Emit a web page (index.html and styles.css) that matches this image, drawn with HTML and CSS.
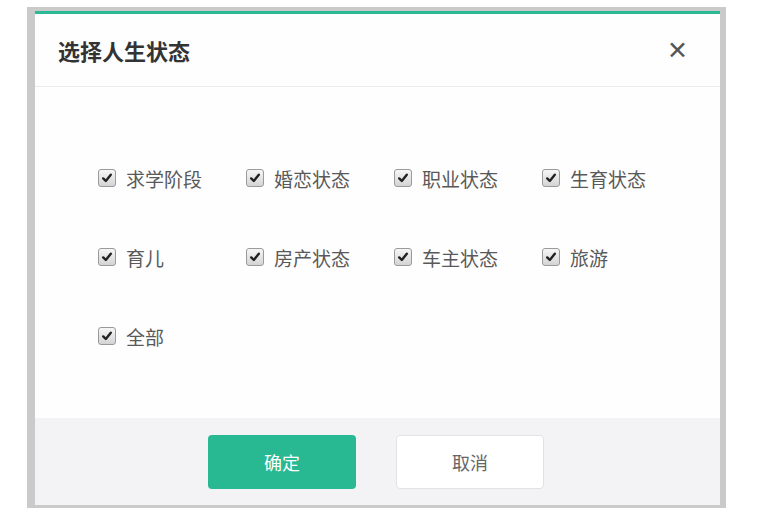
FILE: index.html
```html
<!DOCTYPE html>
<html>
<head>
  <title>选择人生状态</title>
  <link rel="stylesheet" href="styles.css">
</head>
<body>
  <div class="frame">
    <div class="dialog">
      <div class="dialog-header">
        <h2 class="dialog-title">选择人生状态</h2>
        <span class="close">&#x2715;</span>
      </div>
      <div class="dialog-body">
        <label class="option"><span class="box"><svg viewBox="0 0 12 12"><path d="M2.2 6.4 L4.8 9 L9.8 2.8" /></svg></span>求学阶段</label>
        <label class="option"><span class="box"><svg viewBox="0 0 12 12"><path d="M2.2 6.4 L4.8 9 L9.8 2.8" /></svg></span>婚恋状态</label>
        <label class="option"><span class="box"><svg viewBox="0 0 12 12"><path d="M2.2 6.4 L4.8 9 L9.8 2.8" /></svg></span>职业状态</label>
        <label class="option"><span class="box"><svg viewBox="0 0 12 12"><path d="M2.2 6.4 L4.8 9 L9.8 2.8" /></svg></span>生育状态</label>
        <label class="option"><span class="box"><svg viewBox="0 0 12 12"><path d="M2.2 6.4 L4.8 9 L9.8 2.8" /></svg></span>育儿</label>
        <label class="option"><span class="box"><svg viewBox="0 0 12 12"><path d="M2.2 6.4 L4.8 9 L9.8 2.8" /></svg></span>房产状态</label>
        <label class="option"><span class="box"><svg viewBox="0 0 12 12"><path d="M2.2 6.4 L4.8 9 L9.8 2.8" /></svg></span>车主状态</label>
        <label class="option"><span class="box"><svg viewBox="0 0 12 12"><path d="M2.2 6.4 L4.8 9 L9.8 2.8" /></svg></span>旅游</label>
        <label class="option"><span class="box"><svg viewBox="0 0 12 12"><path d="M2.2 6.4 L4.8 9 L9.8 2.8" /></svg></span>全部</label>
      </div>
      <div class="dialog-footer">
        <button class="btn btn-primary">确定</button>
        <button class="btn btn-default">取消</button>
      </div>
    </div>
  </div>
</body>
</html>
```

FILE: styles.css
```css
body {
  margin: 0;
  background-color: #fff;
  font-family: "Noto Sans CJK SC", "Noto Sans", sans-serif;
}

.frame {
  margin: 7px 0 0 27px;
  width: 685px;
  padding: 4px 6px 3px 8px;
  background-color: #cacaca;
}

.dialog {
  background-color: #fefefe;
  border-top: 3px solid #2bb894;
  display: flex;
  flex-direction: column;
  height: 491px;
}

.dialog-header {
  height: 72px;
  border-bottom: 1px solid #ececec;
  display: flex;
  align-items: center;
  justify-content: space-between;
  padding: 0 32px 0 23px;
}

.dialog-title {
  margin: 0;
  font-size: 22px;
  font-weight: bold;
  color: #333;
}

.close {
  font-size: 25px;
  color: #555;
  line-height: 1;
  margin-top: -4px;
}

.dialog-body {
  flex-grow: 1;
  display: grid;
  grid-template-columns: repeat(4, 148px);
  grid-auto-rows: 40px;
  row-gap: 39px;
  align-content: start;
  padding: 71px 0 0 63px;
}

.option {
  display: flex;
  align-items: center;
  font-size: 19px;
  color: #595959;
}

.box {
  width: 16px;
  height: 16px;
  border: 1px solid #9a9a9a;
  border-radius: 3px;
  background: linear-gradient(#f6f6f6, #d4d4d4);
  margin-right: 10px;
  display: flex;
  align-items: center;
  justify-content: center;
}

.box svg {
  width: 12px;
  height: 12px;
  fill: none;
  stroke: #222;
  stroke-width: 2.4;
  stroke-linecap: round;
  stroke-linejoin: round;
}

.dialog-footer {
  height: 87px;
  background-color: #f3f2f4;
  display: flex;
  justify-content: center;
  align-items: flex-start;
  gap: 40px;
  padding: 17px 3px 0 0;
  box-sizing: border-box;
}

.btn {
  width: 148px;
  height: 54px;
  border-radius: 4px;
  font-family: inherit;
  font-size: 18px;
  cursor: pointer;
}

.btn-primary {
  background-color: #28b892;
  color: #fff;
  border: none;
}

.btn-default {
  background-color: #fff;
  color: #666;
  border: 1px solid #e2e2e2;
}
```
